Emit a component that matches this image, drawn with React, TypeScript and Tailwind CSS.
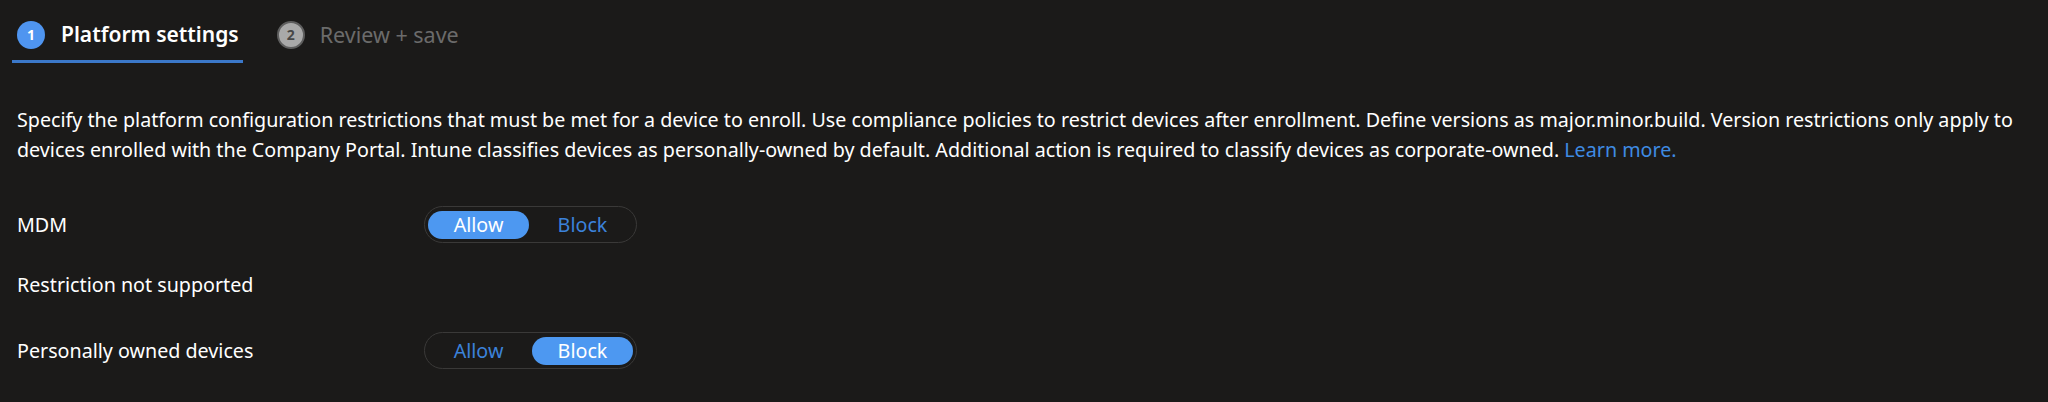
import React from "react";

function Toggle({ value }: { value: "Allow" | "Block" }) {
  const opts: ("Allow" | "Block")[] = ["Allow", "Block"];
  return (
    <div className="flex h-[37px] w-[213px] items-center gap-[3px] rounded-full border border-[#3a3938] px-[3px]">
      {opts.map((o) => (
        <div
          key={o}
          className={
            o === value
              ? "flex h-[28px] w-[101px] items-center justify-center rounded-full bg-[#4d98f1] text-white"
              : "flex h-[28px] w-[101px] items-center justify-center rounded-full text-[#3b82da]"
          }
        >
          {o}
        </div>
      ))}
    </div>
  );
}

export default function App() {
  return (
    <div className="min-h-[402px] w-[2048px] bg-[#1b1a19] font-['Segoe_UI','Noto_Sans',sans-serif] text-white">
      <div className="flex items-end px-[12px] pt-[9px]">
        <div className="flex h-[54px] items-center border-b-[3px] border-[#3b78c9] pl-[5px] pr-[4px]">
          <div className="flex h-[28px] w-[28px] items-center justify-center rounded-full bg-[#4f95f0] text-[14px] font-bold leading-none text-white">
            1
          </div>
          <span className="ml-[16px] text-[21px] font-semibold leading-none text-white">Platform settings</span>
        </div>
        <div className="ml-[34px] flex h-[54px] items-center border-b-[3px] border-transparent">
          <div className="flex h-[28px] w-[28px] items-center justify-center rounded-full border-2 border-[#5e5e5e] bg-[#a9a9a9] text-[14px] font-bold leading-none text-[#474747]">
            2
          </div>
          <span className="ml-[15px] text-[21.5px] leading-none text-[#6b6b6b]">Review + save</span>
        </div>
      </div>

      <p className="mt-[42px] px-[17px] text-[19.7px] leading-[30px] text-white">
        Specify the platform configuration restrictions that must be met for a device to enroll. Use compliance policies to restrict devices after enrollment. Define versions as major.minor.build. Version restrictions only apply to devices enrolled with the Company Portal. Intune classifies devices as personally-owned by default. Additional action is required to classify devices as corporate-owned.{" "}
        <span className="text-[#3f8be2]">Learn more.</span>
      </p>

      <div className="mt-[41px] flex flex-col px-[17px] text-[19.7px] leading-[28px]">
        <div className="flex items-center">
          <div className="w-[407px]">MDM</div>
          <Toggle value="Allow" />
        </div>
        <div className="mt-[28px]">Restriction not supported</div>
        <div className="mt-[33px] flex items-center">
          <div className="w-[407px]">Personally owned devices</div>
          <Toggle value="Block" />
        </div>
      </div>
    </div>
  );
}
